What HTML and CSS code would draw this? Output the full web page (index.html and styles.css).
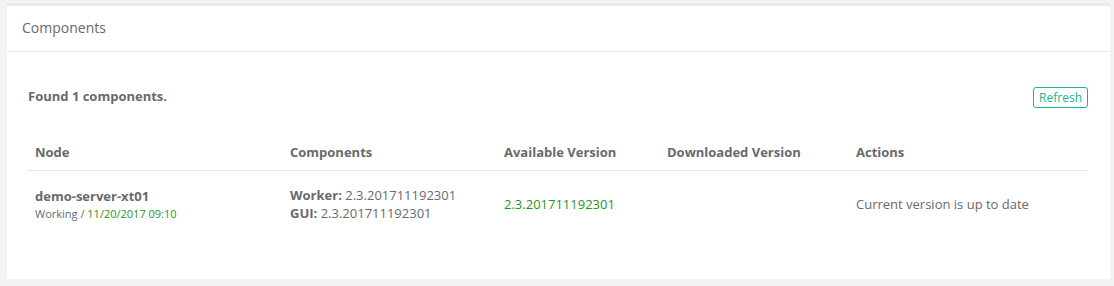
FILE: index.html
```html
<!DOCTYPE html>
<html lang="en">
<head>
    <meta charset="UTF-8">
    <meta name="viewport" content="width=device-width, initial-scale=1.0">
    <title>Components</title>
    <link rel="stylesheet" href="styles.css">
</head>
<body>
    <div class="ibox">
        <div class="ibox-title">
            <h5>Components</h5>
        </div>
        <div class="ibox-content">
            <div class="toolbar">
                <span class="found">Found 1 components.</span>
                <button class="btn-refresh">Refresh</button>
            </div>

            <table class="components-table">
                <colgroup>
                    <col class="col-node">
                    <col class="col-components">
                    <col class="col-available">
                    <col class="col-downloaded">
                    <col class="col-actions">
                </colgroup>
                <thead>
                    <tr>
                        <th>Node</th>
                        <th>Components</th>
                        <th>Available Version</th>
                        <th>Downloaded Version</th>
                        <th>Actions</th>
                    </tr>
                </thead>
                <tbody>
                    <tr>
                        <td>
                            <div class="node-name">demo-server-xt01</div>
                            <div class="node-status">Working / <span class="green">11/20/2017 09:10</span></div>
                        </td>
                        <td>
                            <div><b>Worker:</b> 2.3.201711192301</div>
                            <div><b>GUI:</b> 2.3.201711192301</div>
                        </td>
                        <td><span class="green">2.3.201711192301</span></td>
                        <td></td>
                        <td>Current version is up to date</td>
                    </tr>
                </tbody>
            </table>
        </div>
    </div>
</body>
</html>
```

FILE: styles.css
```css
body {
    margin: 0;
    padding: 3px 4px 6px 7px;
    background: #f3f3f4;
    font-family: "Open Sans", "Helvetica Neue", Arial, sans-serif;
    font-size: 13px;
    color: #676a6c;
}

.ibox {
    background: #fff;
}

.ibox-title {
    border-top: 3px solid #e7eaec;
    border-bottom: 1px solid #e7eaec;
    padding: 12px 15px 13px 15px;
}

.ibox-title h5 {
    margin: 0;
    font-size: 14px;
    font-weight: 400;
    line-height: 20px;
}

.ibox-content {
    padding: 35px 22px 41px 20px;
}

.toolbar {
    display: flex;
    align-items: center;
    justify-content: space-between;
    margin-bottom: 27px;
}

.found {
    font-weight: 700;
    padding-left: 1px;
    padding-bottom: 3px;
}

.btn-refresh {
    font-family: inherit;
    font-size: 12px;
    line-height: 17px;
    padding: 1px 5px;
    color: #1ab394;
    background: transparent;
    border: 1px solid #1ab394;
    border-radius: 3px;
}

.components-table {
    width: 100%;
    border-collapse: collapse;
    table-layout: fixed;
}

.col-node { width: 255px; }
.col-components { width: 214px; }
.col-available { width: 163px; }
.col-downloaded { width: 189px; }

.components-table th {
    text-align: left;
    font-weight: 700;
    line-height: 18.5px;
    padding: 8px;
    border-bottom: 1px solid #e7eaec;
}

.components-table td {
    vertical-align: middle;
    line-height: 18.5px;
    padding: 15px 8px;
}

.components-table b {
    font-weight: 700;
}

.node-name {
    font-weight: 700;
}

.node-status {
    font-size: 11px;
    line-height: 15px;
}

.green {
    color: #1e961e;
}
```
